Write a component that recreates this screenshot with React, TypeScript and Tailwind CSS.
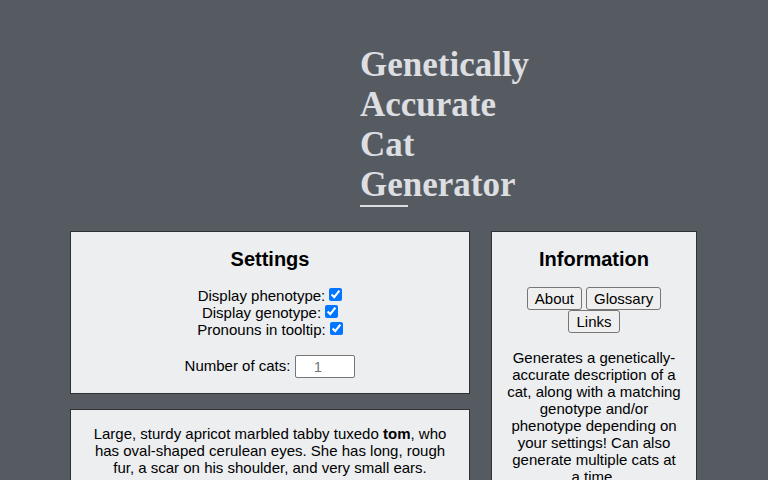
const checks = ["Display phenotype:", "Display genotype:", "Pronouns in tooltip:"];

function Card({ children, className = "" }: { children: React.ReactNode; className?: string }) {
  return (
    <div className={`bg-[#eceef0] border border-[#2e3236] text-center text-black ${className}`}>
      {children}
    </div>
  );
}

function NativeButton({ children }: { children: React.ReactNode }) {
  return (
    <button className="mx-[2px] px-[7px] h-[23px] leading-[21px] bg-[#efefef] border border-[#767676] rounded-[3px] text-[15px] text-black">
      {children}
    </button>
  );
}

export default function App() {
  return (
    <div className="min-h-[480px] bg-[#565b62] font-['Liberation_Sans',Arial,sans-serif] text-[15px] overflow-hidden">
      <div className="w-[627px] ml-[70px] pt-[45px]">
        <div className="pl-[290px] mb-[24px]">
          <h1 className="w-[190px] font-['Liberation_Serif','Times_New_Roman',serif] font-bold text-[35px] leading-[40px] text-[#dcdee1]">
            Genetically Accurate Cat Generator
          </h1>
          <div className="w-[48px] h-[2px] bg-[#dcdee1]" />
        </div>

        <div className="flex items-start gap-[21px]">
          <div className="w-[400px] flex flex-col gap-[15px]">
            <Card className="pt-[16px] pb-[15px]">
              <h2 className="text-[20px] font-bold leading-[23px]">Settings</h2>
              <div className="mt-[16px] leading-[17px]">
                {checks.map((c) => (
                  <div key={c} className="flex items-center justify-center h-[17px]">
                    <span>{c}</span>
                    <input type="checkbox" defaultChecked className="ml-[4px] w-[13px] h-[13px] mb-[3px]" />
                  </div>
                ))}
              </div>
              <div className="mt-[17px] flex items-center justify-center">
                <span>Number of cats:</span>
                <input
                  type="number"
                  placeholder="1"
                  className="ml-[5px] w-[60px] h-[23px] border border-[#767676] rounded-[2px] bg-white text-center text-[15px] placeholder:text-[#767676] outline-none"
                />
              </div>
            </Card>
            <Card className="pt-[15px] pb-[20px] px-[22px] leading-[17px] h-[80px]">
              <p>
                Large, sturdy apricot marbled tabby tuxedo <b>tom</b>, who has oval-shaped cerulean eyes. She has long, rough
                fur, a scar on his shoulder, and very small ears.
              </p>
            </Card>
          </div>

          <Card className="w-[206px] pt-[16px] px-[15px] pb-[20px]">
            <h2 className="text-[20px] font-bold leading-[23px]">Information</h2>
            <div className="mt-[16px] flex flex-wrap justify-center">
              <NativeButton>About</NativeButton>
              <NativeButton>Glossary</NativeButton>
              <NativeButton>Links</NativeButton>
            </div>
            <p className="mt-[16px] leading-[17px]">
              Generates a genetically-accurate description of a cat, along with a matching genotype and/or phenotype
              depending on your settings! Can also generate multiple cats at a time.
            </p>
          </Card>
        </div>
      </div>
    </div>
  );
}
